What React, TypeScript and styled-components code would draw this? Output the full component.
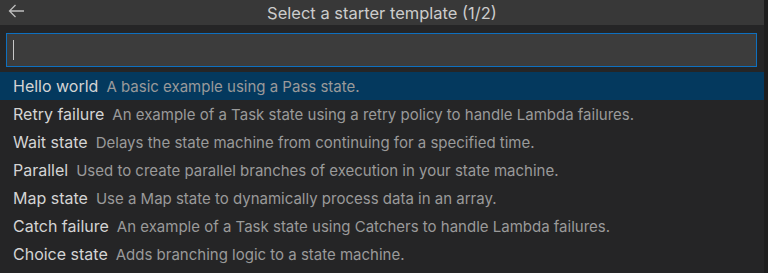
import styled, { createGlobalStyle } from 'styled-components'

const GlobalStyle = createGlobalStyle`
  html, body {
    margin: 0;
    padding: 0;
    background: #1f1f1f;
  }
  body {
    font-family: Inter, "Noto Sans", "Liberation Sans", sans-serif;
    -webkit-font-smoothing: antialiased;
  }
`

const Page = styled.div`
  display: flex;
  width: 768px;
  height: 273px;
  overflow: hidden;
`

const Panel = styled.div`
  display: flex;
  flex-direction: column;
  width: 764px;
  background: #252526;
`

const Header = styled.header`
  position: relative;
  display: flex;
  align-items: center;
  justify-content: center;
  height: 25px;
  background: #383838;
`

const BackButton = styled.button`
  position: absolute;
  left: 7px;
  top: 3px;
  display: flex;
  padding: 0;
  border: 0;
  background: none;
  color: #bdbdbd;
`

const Title = styled.h1`
  margin: 0;
  font-size: 16.5px;
  font-weight: 400;
  color: #cccccc;
`

const InputBox = styled.div`
  display: flex;
  align-items: center;
  height: 32px;
  margin: 8px 7px 5px 6px;
  padding: 0 6px;
  background: #3c3c3c;
  border: 1px solid #0e70c0;
`

const Caret = styled.span`
  width: 1px;
  height: 20px;
  background: #c8c8c8;
`

const List = styled.ul`
  margin: 0;
  padding: 0;
  list-style: none;
`

const Row = styled.li<{ $selected?: boolean }>`
  display: flex;
  align-items: center;
  gap: 8px;
  height: 28px;
  padding: 0 13px;
  background: ${(p) => (p.$selected ? '#04395e' : 'transparent')};
  white-space: nowrap;
`

const Label = styled.span`
  font-size: 16px;
  color: #d4d4d4;
`

const Description = styled.span`
  font-size: 15px;
  color: #9a9a9a;
`

const Scrollbar = styled.div`
  flex: 1;
  background: #1e1e1e;
`

const templates = [
  { label: 'Hello world', description: 'A basic example using a Pass state.' },
  {
    label: 'Retry failure',
    description: 'An example of a Task state using a retry policy to handle Lambda failures.',
  },
  { label: 'Wait state', description: 'Delays the state machine from continuing for a specified time.' },
  { label: 'Parallel', description: 'Used to create parallel branches of execution in your state machine.' },
  { label: 'Map state', description: 'Use a Map state to dynamically process data in an array.' },
  {
    label: 'Catch failure',
    description: 'An example of a Task state using Catchers to handle Lambda failures.',
  },
  { label: 'Choice state', description: 'Adds branching logic to a state machine.' },
]

const App = () => {
  return (
    <Page>
      <GlobalStyle />
      <Panel>
        <Header>
          <BackButton aria-label="Back">
            <svg width="18" height="16" viewBox="0 0 18 16" fill="none" stroke="currentColor" strokeWidth="1.3">
              <path d="M2.5 8h14.5M8.5 2l-6 6 6 6" />
            </svg>
          </BackButton>
          <Title>Select a starter template (1/2)</Title>
        </Header>
        <InputBox>
          <Caret />
        </InputBox>
        <List>
          {templates.map(({ label, description }, i) => (
            <Row key={label} $selected={i === 0}>
              <Label>{label}</Label>
              <Description>{description}</Description>
            </Row>
          ))}
        </List>
      </Panel>
      <Scrollbar />
    </Page>
  )
}

export default App
